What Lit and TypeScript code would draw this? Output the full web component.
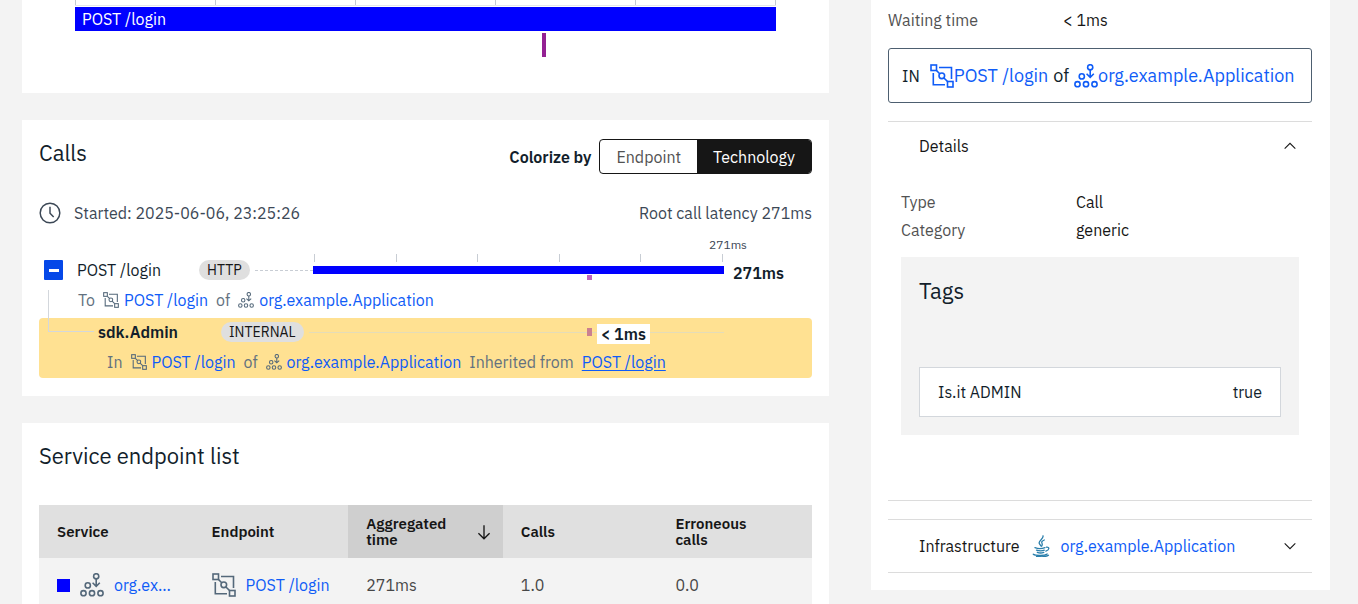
import { LitElement, html, css, svg } from "lit";
import { customElement, property, state } from "lit/decorators.js";

const shapes = {
  endpoint: svg`<rect x="1" y="1" width="5.5" height="5.5"/><rect x="17.5" y="17.5" width="5.5" height="5.5"/><path d="M9 3.5H21.5V15M3.3 9V20.8H15M6.5 6.5l3.2 3.2M13.7 13.7l3.8 3.8"/><circle cx="11.8" cy="11.8" r="2.8"/>`,
  service: svg`<circle cx="16.2" cy="3.3" r="2.6"/><circle cx="7.8" cy="12.4" r="2.6"/><circle cx="3.5" cy="20.2" r="2.6"/><circle cx="12" cy="20.2" r="2.6"/><circle cx="20.5" cy="20.2" r="2.6"/><path d="M16.2 5.9V13.2M12.6 9.8L16.2 13.3L19.8 9.8"/>`,
  clock: svg`<circle cx="12" cy="12" r="10.7"/><path d="M12 5.2V12.2L16 16.4"/>`,
  up: svg`<path d="M4 16L12 8L20 16"/>`,
  down: svg`<path d="M4 8L12 16L20 8"/>`,
  sort: svg`<path d="M12 4V20M5.3 13.6L12 20.2L18.7 13.6"/>`,
};

@customElement("line-icon")
class LineIcon extends LitElement {
  @property() name: keyof typeof shapes = "endpoint";
  static styles = css`
    :host { display: inline-flex; flex: none; width: 24px; height: 24px; }
    svg { width: 100%; height: 100%; fill: none; stroke: currentColor; stroke-width: 1.6; }
  `;
  render() {
    return html`<svg viewBox="0 0 24 24" aria-hidden="true">${shapes[this.name]}</svg>`;
  }
}

@customElement("app-root")
class AppRoot extends LitElement {
  @state() colorize = "Technology";

  static styles = css`
    :host {
      display: block;
      height: 100vh;
      overflow: hidden;
      background: #f3f3f3;
      color: #161616;
      font: 400 16px/20px "IBM Plex Sans", "Noto Sans", sans-serif;
    }
    * { box-sizing: border-box; }
    a { color: #0f5cf7; text-decoration: none; }
    button { font: inherit; color: inherit; background: none; border: 0; padding: 0; cursor: pointer; }
    h2, h3 { margin: 0; font-size: 22px; line-height: 28px; font-weight: 400; color: #121e2b; }
    .page { display: grid; grid-template-columns: 807fr 459fr; gap: 42px; padding: 0 28px 0 22px; align-items: start; }
    .main { display: grid; gap: 27px; }
    .card { background: #fff; padding: 0 17px; min-width: 0; }
    .timeline { padding: 0 53px 36px; }
    .grid { display: flex; justify-content: space-between; height: 6px; border-bottom: 1px solid #e3e6ea; }
    .grid i { width: 1px; height: 5px; background: #c3c9d1; }
    .span { height: 24px; margin-top: 1px; padding: 2px 7px; background: #0000ff; color: #fff; }
    .child { width: 4px; height: 24px; margin-top: 2px; background: #942193; }

    .calls { padding-top: 19px; padding-bottom: 18px; }
    .top { display: flex; align-items: center; justify-content: space-between; height: 35px; }
    .top h2 { align-self: flex-start; }
    .colorize { display: flex; align-items: center; gap: 8px; font-weight: 600; color: #121e2b; }
    .switch { display: flex; height: 35px; border: 1px solid #161616; border-radius: 4px; overflow: hidden; font-weight: 400; }
    .switch button { padding: 0 16px; color: #525252; }
    .switch button.on { background: #161616; color: #fff; }
    .meta { display: flex; align-items: center; justify-content: space-between; height: 22px; margin-top: 28px; color: #3c4856; }
    .started { display: flex; align-items: center; gap: 13px; }
    .started line-icon { width: 22px; height: 22px; }
    .cols { display: grid; grid-template-columns: 274px 1fr 88px; }
    .axis { margin-top: 13px; }
    .scale { grid-column: 2; }
    .max { display: flex; justify-content: flex-end; font-size: 12px; line-height: 16px; color: #3c4856; }
    .max span { width: 0; margin-right: -4px; display: flex; justify-content: center; white-space: nowrap; }
    .ticks { display: flex; justify-content: space-between; height: 8px; margin: 1px 1px 0; }
    .ticks i { width: 1px; background: #c8cdd4; }
    .call { height: 28px; margin-top: -6px; align-items: center; }
    .name { display: flex; align-items: center; padding-left: 5px; }
    .toggle { flex: none; width: 19px; height: 20px; border-radius: 1px; background: #0548e8; display: grid; place-items: center; }
    .toggle i { width: 10px; height: 3px; background: #fff; }
    .label { flex: none; width: 136px; padding-left: 14px; color: #121e2b; }
    .tag { padding: 0 8px; border-radius: 10px; background: #dfdfdf; color: #161616; font-size: 14px; line-height: 20px; }
    .dash { flex: 1; margin-left: 5px; border-top: 1px dashed #c8cdd4; }
    .track { position: relative; height: 8px; }
    .bar { height: 8px; background: #0000ff; }
    .mark { position: absolute; top: 9px; width: 5px; height: 5px; background: #c063bd; }
    .time { padding: 6px 0 0 9px; font-weight: 600; color: #121e2b; }
    .tree { position: relative; }
    .branch { position: absolute; left: 9px; top: -28px; width: 46px; height: 42px; border: solid #d3d7dc; border-width: 0 0 1px 1px; }
    .ref { display: flex; align-items: center; gap: 8px; color: #63717f; white-space: nowrap; }
    .ref a { display: flex; align-items: center; gap: 5px; }
    .ref line-icon { width: 16px; height: 16px; color: #54687a; }
    .to { margin-top: 6px; padding-left: 39px; }
    .selected { height: 60px; margin-top: 8px; padding-top: 4px; border-radius: 4px; background: #ffe192; }
    .selected .cols { height: 20px; align-items: center; }
    .selected .name { padding-left: 59px; }
    .selected .label { width: 123px; padding: 0; font-weight: 600; }
    .selected .dash { border-top: 1px solid #e4dcb8; }
    .selected .track { display: grid; align-items: center; }
    .selected .rule { height: 1px; background: #e4dcb8; }
    .selected .mark { top: 0; height: 8px; background: #cb8090; }
    .chip { position: absolute; top: -4px; margin-left: 10px; padding: 0 4px; background: #fff; font-weight: 600; color: #121e2b; white-space: nowrap; }
    .in { margin-top: 10px; padding-left: 68px; }
    .in .from { text-decoration: underline; text-underline-offset: 2px; }

    .list { padding-top: 19px; padding-bottom: 18px; }
    table { width: 100%; margin-top: 35px; border-collapse: collapse; table-layout: fixed; }
    th { height: 53px; padding: 0 18px; background: #e0e0e0; text-align: left; font-weight: 600; font-size: 15px; line-height: 16px; }
    th.sorted { background: #cfcfcf; padding-right: 9px; }
    .sorted button { display: flex; width: 100%; align-items: center; justify-content: space-between; text-align: left; font-weight: 600; line-height: 16px; }
    .sorted line-icon { width: 20px; height: 20px; }
    td { height: 54px; padding: 0 8px 0 18px; background: #f3f3f3; color: #474747; }
    .cell { display: flex; align-items: center; gap: 10px; color: #54687a; }
    .cell a { max-width: 60px; overflow: hidden; text-overflow: ellipsis; white-space: nowrap; }
    .cell .full { max-width: none; }
    .swatch { flex: none; width: 13px; height: 13px; background: #0000ff; }

    .side { padding: 10px 18px 17px 17px; }
    dl { margin: 0; display: grid; grid-template-columns: 175px 1fr; row-gap: 8px; }
    dt { color: #525252; }
    dd { margin: 0; color: #161616; }
    .origin { display: flex; align-items: center; height: 55px; margin-top: 18px; padding: 0 13px; border: 1px solid #4d5f70; border-radius: 3px; font-size: 18px; color: #121e2b; white-space: nowrap; }
    .origin small { font-size: 16px; margin-right: 10px; }
    .origin a { display: flex; align-items: center; }
    .of { margin: 0 5px; }
    .fold { margin-top: 18px; border-top: 1px solid #dcdcdc; border-bottom: 1px solid #dcdcdc; }
    .head { display: flex; align-items: center; width: 100%; height: 48px; padding: 0 14px 0 31px; }
    .head line-icon { width: 16px; height: 16px; margin-left: auto; }
    .body { padding: 22px 13px 65px; }
    .tags { margin-top: 17px; padding: 20px 18px 18px; background: #f3f3f3; }
    .pair { display: flex; justify-content: space-between; align-items: center; height: 50px; margin-top: 62px; padding: 0 18px; background: #fff; border: 1px solid #d3d7dc; color: #121e2b; }
    .fold.infra .head { height: 52px; }
    .java { flex: none; width: 18px; height: 22px; margin: 0 11px 0 12px; fill: none; stroke: #2a7eab; stroke-width: 1.3; stroke-linecap: round; }
  `;

  private endpoint() {
    return html`<a href="#"><line-icon name="endpoint"></line-icon>POST /login</a>`;
  }
  private service() {
    return html`<a href="#"><line-icon name="service"></line-icon>org.example.Application</a>`;
  }
  private ticks() {
    return [0, 1, 2, 3, 4, 5].map(() => html`<i></i>`);
  }

  render() {
    const start = 66.6;
    return html`
      <div class="page">
        <main class="main">
          <section class="card timeline">
            <div class="grid">${this.ticks()}</div>
            <div class="span">POST /login</div>
            <div class="child" style="margin-left:${start}%"></div>
          </section>

          <section class="card calls">
            <div class="top">
              <h2>Calls</h2>
              <div class="colorize">
                <span id="by">Colorize by</span>
                <div class="switch" role="group" aria-labelledby="by">
                  ${["Endpoint", "Technology"].map((n) => html`<button
                    class=${this.colorize === n ? "on" : ""}
                    aria-pressed=${this.colorize === n}
                    @click=${() => (this.colorize = n)}>${n}</button>`)}
                </div>
              </div>
            </div>
            <div class="meta">
              <span class="started"><line-icon name="clock"></line-icon>Started: 2025-06-06, 23:25:26</span>
              <span>Root call latency 271ms</span>
            </div>
            <div class="cols axis">
              <div class="scale">
                <div class="max"><span>271ms</span></div>
                <div class="ticks">${this.ticks()}</div>
              </div>
            </div>
            <div class="cols call">
              <div class="name">
                <button class="toggle" aria-label="Collapse"><i></i></button>
                <span class="label">POST /login</span>
                <span class="tag">HTTP</span>
                <span class="dash"></span>
              </div>
              <div class="track"><div class="bar"></div><i class="mark" style="left:${start}%"></i></div>
              <div class="time">271ms</div>
            </div>
            <div class="ref to">To ${this.endpoint()} of ${this.service()}</div>
            <div class="tree selected">
              <i class="branch"></i>
              <div class="cols">
                <div class="name">
                  <span class="label">sdk.Admin</span>
                  <span class="tag">INTERNAL</span>
                  <span class="dash"></span>
                </div>
                <div class="track">
                  <div class="rule"></div>
                  <i class="mark" style="left:${start}%"></i>
                  <span class="chip" style="left:${start}%">&lt; 1ms</span>
                </div>
              </div>
              <div class="ref in">
                In ${this.endpoint()} of ${this.service()}
                <span>Inherited from</span><a class="from" href="#">POST /login</a>
              </div>
            </div>
          </section>

          <section class="card list">
            <h2>Service endpoint list</h2>
            <table>
              <thead>
                <tr>
                  <th>Service</th>
                  <th>Endpoint</th>
                  <th class="sorted" aria-sort="descending"><button>Aggregated<br />time<line-icon name="sort"></line-icon></button></th>
                  <th>Calls</th>
                  <th>Erroneous<br />calls</th>
                </tr>
              </thead>
              <tbody>
                <tr>
                  <td><div class="cell"><i class="swatch"></i><line-icon name="service"></line-icon><a href="#">org.example.Application</a></div></td>
                  <td><div class="cell"><line-icon name="endpoint"></line-icon><a class="full" href="#">POST /login</a></div></td>
                  <td>271ms</td>
                  <td>1.0</td>
                  <td>0.0</td>
                </tr>
              </tbody>
            </table>
          </section>
        </main>

        <aside class="card side">
          <dl><dt>Waiting time</dt><dd>&lt; 1ms</dd></dl>
          <div class="origin"><small>IN</small>${this.endpoint()}<span class="of">of</span>${this.service()}</div>
          <section class="fold">
            <button class="head" aria-expanded="true">Details<line-icon name="up"></line-icon></button>
            <div class="body">
              <dl><dt>Type</dt><dd>Call</dd><dt>Category</dt><dd>generic</dd></dl>
              <div class="tags">
                <h3>Tags</h3>
                <div class="pair"><span>Is.it ADMIN</span><span>true</span></div>
              </div>
            </div>
          </section>
          <section class="fold infra">
            <div class="head">
              Infrastructure
              <svg class="java" viewBox="0 0 18 22" aria-hidden="true">
                <path d="M11 .8C12 4 6 5.500 7.300 8.500C7.700 9.500 8.700 10.400 9.200 11.300"/>
                <path d="M12.300 5C9.600 6.100 9.300 7.200 10.100 8.500C10.600 9.500 10.200 10.300 9.700 11"/>
                <path d="M3 12.600C5.500 13.600 10.500 13.500 13 12.600M4.500 15.100C7 16 10.500 15.900 12.300 15.200M5.300 17.300C7.300 18.200 10.200 18 11.800 17.400M1.300 19.200C3.500 21 12.500 20.900 15.200 19M4.500 21.500C9 22 14.500 21.600 16.500 20.300"/>
                <path d="M14.500 12.200C17.800 11.800 17.600 14.800 13.900 16.200"/>
              </svg>
              <a href="#">org.example.Application</a>
              <line-icon name="down"></line-icon>
            </div>
          </section>
        </aside>
      </div>
    `;
  }
}
